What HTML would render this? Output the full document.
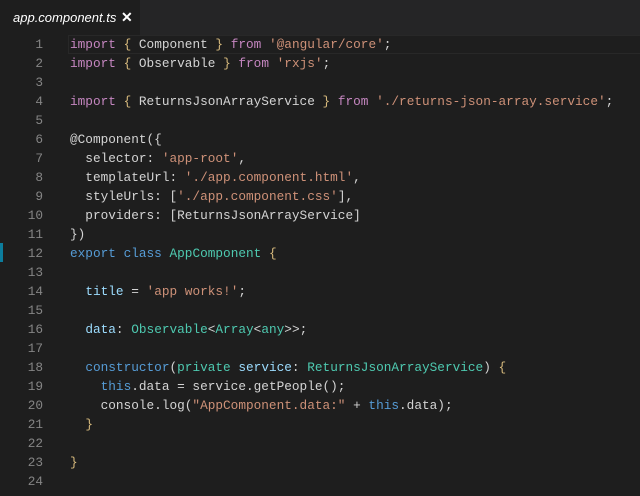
<!DOCTYPE html>
<html><head><meta charset="utf-8"><style>
html,body{margin:0;padding:0;width:640px;height:496px;background:#1e1e1e;overflow:hidden}
.tabs{position:absolute;left:0;top:0;width:640px;height:35px;background:#252526}
.tab{position:absolute;left:0;top:0;width:140px;height:35px;background:#1e1e1e;color:#fff;font:italic 13px "Liberation Sans",sans-serif;line-height:35px}
.tab span{position:absolute;left:13px}
.tab b{position:absolute;left:121px;top:0;font:bold 14px "Liberation Sans",sans-serif;line-height:35px}
.code{position:absolute;left:0;top:35px;width:640px;font:12.75px/19px "Liberation Mono",monospace;color:#d4d4d4}
.l{height:19px;white-space:pre;position:relative}
.n{position:absolute;left:0;width:43px;text-align:right;color:#858585}
.t{position:absolute;left:70px}
.cur{position:absolute;left:68px;top:0;width:572px;height:17px;border:1px solid #282828}
.k{color:#c586c0}.b{color:#569cd6}.ty{color:#4ec9b0}.s{color:#ce9178}.v{color:#9cdcfe}.f{color:#dcdcaa}.y{color:#d7ba7d}
.mark{position:absolute;left:0;top:243px;width:3px;height:19px;background:#0c7d9d}
</style></head><body>
<div class="tabs"><div class="tab"><span>app.component.ts</span><b>✕</b></div></div>
<div class="mark"></div>
<div class="code">
<div class="l"><div class="cur"></div><span class="n">1</span><span class="t"><span class="k">import</span> <span class="y">{</span> Component <span class="y">}</span> <span class="k">from</span> <span class="s">'@angular/core'</span>;</span></div>
<div class="l"><span class="n">2</span><span class="t"><span class="k">import</span> <span class="y">{</span> Observable <span class="y">}</span> <span class="k">from</span> <span class="s">'rxjs'</span>;</span></div>
<div class="l"><span class="n">3</span></div>
<div class="l"><span class="n">4</span><span class="t"><span class="k">import</span> <span class="y">{</span> ReturnsJsonArrayService <span class="y">}</span> <span class="k">from</span> <span class="s">'./returns-json-array.service'</span>;</span></div>
<div class="l"><span class="n">5</span></div>
<div class="l"><span class="n">6</span><span class="t">@Component({</span></div>
<div class="l"><span class="n">7</span><span class="t">  selector: <span class="s">'app-root'</span>,</span></div>
<div class="l"><span class="n">8</span><span class="t">  templateUrl: <span class="s">'./app.component.html'</span>,</span></div>
<div class="l"><span class="n">9</span><span class="t">  styleUrls: [<span class="s">'./app.component.css'</span>],</span></div>
<div class="l"><span class="n">10</span><span class="t">  providers: [ReturnsJsonArrayService]</span></div>
<div class="l"><span class="n">11</span><span class="t">})</span></div>
<div class="l"><span class="n">12</span><span class="t"><span class="b">export</span> <span class="b">class</span> <span class="ty">AppComponent</span> <span class="y">{</span></span></div>
<div class="l"><span class="n">13</span></div>
<div class="l"><span class="n">14</span><span class="t">  <span class="v">title</span> = <span class="s">'app works!'</span>;</span></div>
<div class="l"><span class="n">15</span></div>
<div class="l"><span class="n">16</span><span class="t">  <span class="v">data</span>: <span class="ty">Observable</span>&lt;<span class="ty">Array</span>&lt;<span class="ty">any</span>&gt;&gt;;</span></div>
<div class="l"><span class="n">17</span></div>
<div class="l"><span class="n">18</span><span class="t">  <span class="b">constructor</span>(<span class="ty">private</span> <span class="v">service</span>: <span class="ty">ReturnsJsonArrayService</span>) <span class="y">{</span></span></div>
<div class="l"><span class="n">19</span><span class="t">    <span class="b">this</span>.data = service.getPeople();</span></div>
<div class="l"><span class="n">20</span><span class="t">    console.log(<span class="s">"AppComponent.data:"</span> + <span class="b">this</span>.data);</span></div>
<div class="l"><span class="n">21</span><span class="t">  <span class="y">}</span></span></div>
<div class="l"><span class="n">22</span></div>
<div class="l"><span class="n">23</span><span class="t"><span class="y">}</span></span></div>
<div class="l"><span class="n">24</span></div>
</div>
</body></html>
